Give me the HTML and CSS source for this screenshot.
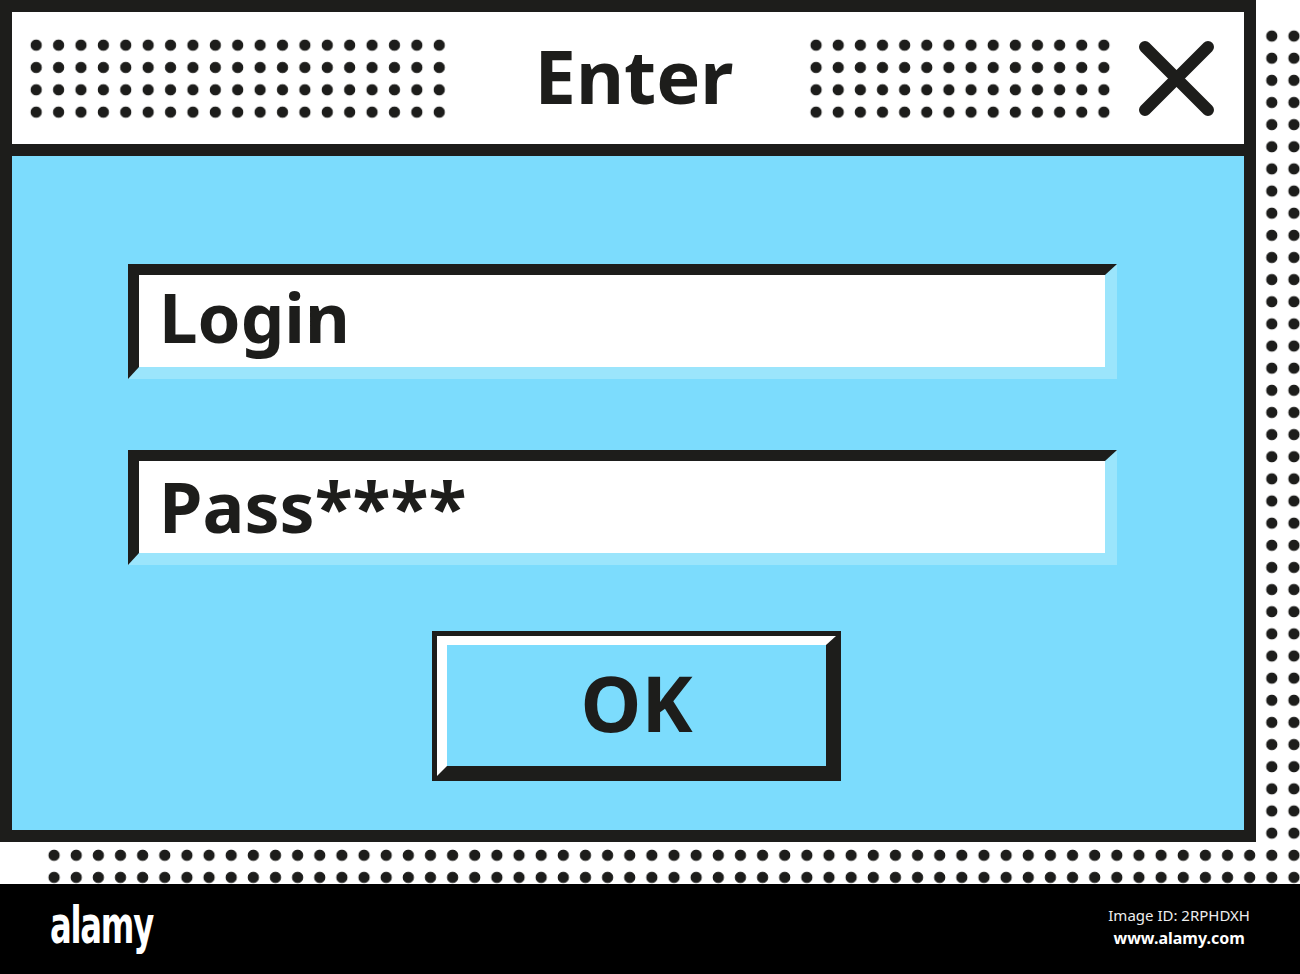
FILE: index.html
```html
<!DOCTYPE html>
<html lang="en">
<head>
    <meta charset="UTF-8"/>
    <meta name="viewport" content="width=device-width, initial-scale=1.0"/>
    <title>Enter</title>
    <link rel="stylesheet" href="styles.css">
</head>
<body>
<div class="scene">
    <div class="dot-shadow"></div>
    <div class="window">
        <div class="titlebar">
            <div class="dots dots-left"></div>
            <div class="title">Enter</div>
            <div class="dots dots-right"></div>
            <svg class="close" viewBox="0 0 77 77">
                <path d="M7 7 L70 70 M70 7 L7 70" fill="none" stroke="#1d1d1b" stroke-width="12" stroke-linecap="round"/>
            </svg>
        </div>
        <div class="body">
            <div class="field">Login</div>
            <div class="field field-pass">Pass****</div>
            <div class="ok">
                <span class="ok-face">OK</span>
            </div>
        </div>
    </div>
</div>
<div class="footer">
    <div class="logo">alamy</div>
    <div class="info">
        <div>Image ID: 2RPHDXH</div>
        <div class="site">www.alamy.com</div>
    </div>
</div>
</body>
</html>
```

FILE: styles.css
```css
body {
    margin: 0;
    width: 1300px;
    height: 974px;
    overflow: hidden;
    font-family: "Noto Sans", "Open Sans", sans-serif;
    color: #1d1d1b;
}

.scene {
    position: relative;
    height: 884px;
    background: #fff;
    overflow: hidden;
}

/* dotted drop shadow behind the window */
.dot-shadow {
    position: absolute;
    left: 43px;
    top: 25px;
    width: 1262px;
    height: 864px;
    background-image: radial-gradient(circle, #1d1d1b 5.2px, transparent 6px);
    background-size: 22.15px 22.15px;
}

.window {
    position: relative;
    width: 1256px;
    box-sizing: border-box;
    border: 12px solid #1d1d1b;
}

.titlebar {
    display: flex;
    align-items: center;
    height: 132px;
    background: #fff;
    border-bottom: 12px solid #1d1d1b;
}

.dots {
    height: 89px;
    background-image: radial-gradient(circle, #1d1d1b 5.2px, transparent 6px);
    background-size: 22.4px 22.33px;
}

.dots-left {
    width: 426px;
    margin-left: 13px;
}

.dots-right {
    width: 310px;
    background-size: 22.15px 22.33px;
}

.title {
    flex: 1;
    padding-left: 12px;
    margin-bottom: 4px;
    text-align: center;
    font-size: 74px;
    font-weight: 700;
    line-height: 1;
}

.close {
    width: 77px;
    height: 77px;
    margin-left: 23px;
    margin-right: 29px;
}

.body {
    height: 674px;
    box-sizing: border-box;
    padding-top: 108px;
    background: #7cdcfd;
}

.field {
    width: 989px;
    height: 115px;
    margin-left: 116px;
    box-sizing: border-box;
    padding-left: 20px;
    border-style: solid;
    border-width: 11px 12px 12px 11px;
    border-color: #1d1d1b #9be5fc #9be5fc #1d1d1b;
    background: #fff;
    font-size: 69px;
    font-weight: 700;
    line-height: 82px;
}

.field + .field {
    margin-top: 71px;
}

.field-pass {
    padding-top: 4px;
    font-size: 70px;
}

.ok {
    width: 409px;
    height: 150px;
    margin: 66px 0 0 420px;
    box-sizing: border-box;
    border: 5px solid #1d1d1b;
}

.ok-face {
    display: flex;
    align-items: center;
    justify-content: center;
    height: 100%;
    box-sizing: border-box;
    padding-bottom: 7px;
    border-style: solid;
    border-width: 9px 10px 10px 10px;
    border-color: #fff #1d1d1b #1d1d1b #fff;
    font-size: 77px;
    font-weight: 700;
    line-height: 1;
}

.footer {
    display: flex;
    justify-content: space-between;
    align-items: flex-start;
    height: 90px;
    padding: 0 50px;
    background: #000;
    color: #fff;
}

.logo {
    display: inline-block;
    margin-top: 15px;
    font-family: "DejaVu Sans", sans-serif;
    font-size: 52px;
    font-weight: 700;
    line-height: 1;
    letter-spacing: -2px;
    transform: scaleX(0.62);
    transform-origin: left top;
}

.info {
    margin-top: 20px;
    text-align: center;
    font-size: 15px;
    line-height: 23px;
    color: #eee;
}

.info .site {
    font-size: 16px;
    font-weight: 700;
    color: #fff;
}
```
